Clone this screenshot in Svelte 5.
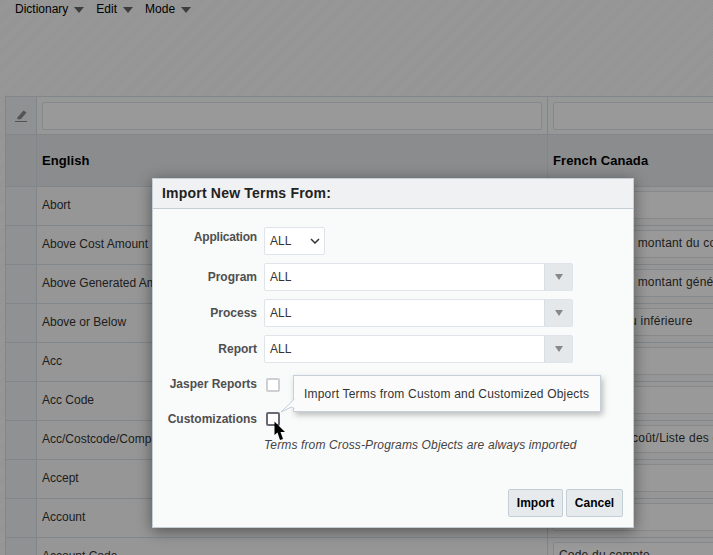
<script>
    let rows = [
        { en: "Abort", fr: "" },
        { en: "Above Cost Amount", fr: "Au dessus du montant du coût" },
        { en: "Above Generated Amount", fr: "Au dessus du montant généré" },
        { en: "Above or Below", fr: "Supérieure ou inférieure" },
        { en: "Acc", fr: "" },
        { en: "Acc Code", fr: "" },
        { en: "Acc/Costcode/Company", fr: "Cpt/Code de coût/Liste des cies" },
        { en: "Accept", fr: "" },
        { en: "Account", fr: "" },
        { en: "Account Code", fr: "Code du compte" },
    ];
    let menus = ["Dictionary", "Edit", "Mode"];
    let fields = ["Program", "Process", "Report"];
</script>

<div class="page">
    <nav class="menubar">
        {#each menus as m}
            <span class="menu">{m}<i class="arrow"></i></span>
        {/each}
    </nav>

    <div class="table">
        <div class="cell first">
            <svg width="13" height="14" viewBox="0 0 13 14">
                <path d="M2 9 L8.500 1.500 L11.500 3.500 L6 10 L3 10.500 Z" fill="#8a8a8a" />
                <rect x="0" y="12" width="12" height="1" fill="#8a8a8a" />
            </svg>
        </div>
        <div class="cell filter"><div class="box"></div></div>
        <div class="cell filter"><div class="box"></div></div>

        <div class="cell first head"></div>
        <div class="cell head">English</div>
        <div class="cell head">French Canada</div>

        {#each rows as r}
            <div class="cell first"></div>
            <div class="cell term">{r.en}</div>
            <div class="cell inputcell"><div class="box text">{r.fr}</div></div>
        {/each}
    </div>

    <div class="overlay"></div>

    <div class="dialog">
        <header>Import New Terms From:</header>
        <div class="body">
            <div class="line app">
                <span class="lbl">Application</span>
                <div class="select">ALL
                    <svg width="10" height="6" viewBox="0 0 10 6">
                        <path d="M1 1 L5 5 L9 1" fill="none" stroke="#333" stroke-width="1.5" />
                    </svg>
                </div>
            </div>
            {#each fields as f}
                <div class="line">
                    <span class="lbl">{f}</span>
                    <div class="combo">
                        <span class="val">ALL</span>
                        <span class="drop"><i class="arrow"></i></span>
                    </div>
                </div>
            {/each}
            <div class="line check">
                <span class="lbl">Jasper Reports</span>
                <span class="cb"></span>
            </div>
            <div class="line check cust">
                <span class="lbl">Customizations</span>
                <span class="cb hover"></span>
            </div>
            <p class="note">Terms from Cross-Programs Objects are always imported</p>
        </div>
        <footer>
            <button class="import">Import</button>
            <button class="cancel">Cancel</button>
        </footer>

        <div class="tip">Import Terms from Custom and Customized Objects</div>
        <svg class="tail" width="16" height="16" viewBox="0 0 16 16">
            <path d="M14.500 1 L1 14 L11.500 9 L14.500 10.500 Z" fill="#fbfbfc" />
            <path d="M14.500 1 L1 14 L11.500 9 L14.500 10.500" fill="none" stroke="#c5d0da" />
        </svg>
        <svg class="cursor" width="12" height="20" viewBox="0 0 12 20">
            <path d="M0.500 0.500 L0.500 14 L3.500 11.500 L6 19 L9 18 L6.500 11 L11 11 Z" fill="#000" />
        </svg>
    </div>
</div>

<style>
    :global(body) {
        margin: 0;
        background: #fff;
    }

    .page {
        position: relative;
        width: 713px;
        height: 555px;
        overflow: hidden;
        background: repeating-linear-gradient(135deg, #f7f7f7 0 1px, #fdfdfd 1px 2px);
        font-family: "Liberation Sans", Arial, sans-serif;
        font-size: 12px;
        color: #333;
    }

    .menubar {
        display: flex;
        gap: 12px;
        height: 96px;
        padding: 2px 0 0 15px;
        box-sizing: border-box;
        color: #000;
    }

    .menu {
        line-height: 14px;
    }

    .arrow {
        display: inline-block;
        width: 0;
        height: 0;
        margin-left: 6px;
        border-left: 5px solid transparent;
        border-right: 5px solid transparent;
        border-top: 6px solid #666;
    }

    .table {
        display: grid;
        grid-template-columns: 31px 511px 300px;
        grid-template-rows: 38px 52px;
        grid-auto-rows: 39px;
        margin-left: 5px;
        background: #fbfbfb;
        border-top: 1px solid #d6dfe6;
        border-left: 1px solid #d6dfe6;
    }

    .cell {
        box-sizing: border-box;
        display: flex;
        align-items: center;
        padding-left: 5px;
        border-right: 1px solid #d6dfe6;
        border-bottom: 1px solid #d6dfe6;
        white-space: nowrap;
        overflow: hidden;
    }

    .first {
        background: #eef2f6;
        padding-left: 9px;
    }

    .filter {
        background: #fafcfc;
    }

    .head {
        background: #e8e9eb;
        font-weight: bold;
        font-size: 13px;
        letter-spacing: 0.1px;
        color: #000;
    }

    .term {
        padding-bottom: 2px;
    }

    .inputcell {
        align-items: flex-start;
        padding-top: 4px;
    }

    .box {
        box-sizing: border-box;
        width: 100%;
        height: 28px;
        margin-right: 5px;
        background: #fff;
        border: 1px solid #dfe4ea;
        border-radius: 2px;
    }

    .text {
        padding: 5px 5px;
        line-height: 14px;
        letter-spacing: 0.2px;
        overflow: hidden;
    }

    .overlay {
        position: absolute;
        inset: 0;
        background: rgba(0, 0, 0, 0.4);
    }

    .dialog {
        position: absolute;
        left: 152px;
        top: 178px;
        width: 482px;
        height: 350px;
        box-sizing: border-box;
        display: flex;
        flex-direction: column;
        background: #f9fafa;
        border: 1px solid #c4ced7;
        box-shadow: 0 3px 14px rgba(0, 0, 0, 0.45);
    }

    header {
        height: 30px;
        padding-left: 9px;
        box-sizing: border-box;
        line-height: 29px;
        background: #f0f1f2;
        border-bottom: 1px solid #c4ced7;
        font-weight: bold;
        font-size: 14px;
        letter-spacing: 0.2px;
        color: #222;
    }

    .body {
        flex: 1;
        padding: 18px 0 0 0;
    }

    .line {
        display: flex;
        align-items: center;
        gap: 7px;
        height: 28px;
        margin-bottom: 8px;
    }

    .lbl {
        width: 104px;
        text-align: right;
        font-weight: bold;
        color: #4f4f4f;
    }

    .app .lbl {
        margin-top: -8px;
        letter-spacing: -0.2px;
    }

    .select {
        box-sizing: border-box;
        display: flex;
        align-items: center;
        justify-content: space-between;
        width: 61px;
        height: 28px;
        padding: 0 4px 0 5px;
        background: #fff;
        border: 1px solid #dfe4ea;
        border-radius: 2px;
    }

    .combo {
        display: flex;
        width: 309px;
        height: 28px;
        box-sizing: border-box;
        background: #fff;
        border: 1px solid #dfe4ea;
        border-radius: 2px;
    }

    .val {
        flex: 1;
        padding-left: 5px;
        line-height: 26px;
    }

    .drop {
        display: flex;
        align-items: center;
        justify-content: center;
        width: 27px;
        background: #e4e8ea;
        border-left: 1px solid #d6dfe6;
    }

    .drop .arrow {
        margin: 0;
        border-left-width: 4.5px;
        border-right-width: 4.5px;
        border-top-color: #888;
    }

    .check {
        height: 14px;
        margin: 14px 0 20px;
    }

    .cust .lbl {
        margin-top: 2px;
    }

    .cb {
        box-sizing: border-box;
        width: 14px;
        height: 14px;
        margin: 1px 0 0 2px;
        background: #fff;
        border: 2px solid #cfcfd3;
        border-radius: 2px;
    }

    .cb.hover {
        border-color: #6a6a75;
    }

    .note {
        margin: -7px 0 0 111px;
        font-style: italic;
        letter-spacing: 0.13px;
        color: #444;
    }

    footer {
        display: flex;
        justify-content: flex-end;
        gap: 3px;
        padding: 0 10px 10px 0;
    }

    button {
        box-sizing: border-box;
        height: 28px;
        padding: 0;
        font: bold 12px "Liberation Sans", Arial, sans-serif;
        color: #000;
        background: #e6eaed;
        border: 1px solid #c4ced7;
        border-radius: 2px;
    }

    .import {
        width: 55px;
    }

    .cancel {
        width: 57px;
    }

    .tip {
        position: absolute;
        left: 140px;
        top: 196px;
        width: 308px;
        height: 37px;
        box-sizing: border-box;
        padding: 0 10px;
        line-height: 36px;
        letter-spacing: 0.2px;
        white-space: nowrap;
        background: #fbfbfc;
        border: 1px solid #c5d0da;
        box-shadow: 2px 3px 6px rgba(0, 0, 0, 0.25);
    }

    .tail {
        position: absolute;
        left: 127px;
        top: 219px;
    }

    .cursor {
        position: absolute;
        left: 121px;
        top: 242px;
    }
</style>
